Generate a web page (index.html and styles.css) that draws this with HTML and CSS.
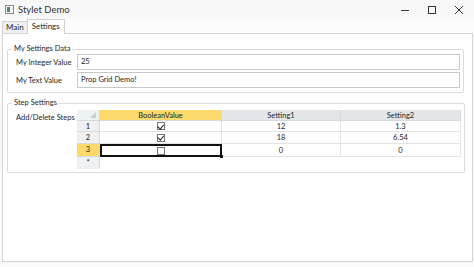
FILE: index.html
```html
<!DOCTYPE html>
<html lang="en">
<head>
  <meta charset="UTF-8" />
  <title>Stylet Demo</title>
  <link rel="stylesheet" href="styles.css">
</head>
<body>
  <div class="window">
    <div class="titlebar">
      <svg class="app-icon" width="9" height="9" viewBox="0 0 9 9">
        <rect x="0.5" y="0.5" width="8" height="8" fill="#f4f4f4" stroke="#8a8a8a"/>
        <rect x="2" y="2" width="3" height="5" fill="#3d8f86"/>
      </svg>
      <span class="title">Stylet Demo</span>
      <div class="controls">
        <svg width="10" height="10" viewBox="0 0 10 10"><path d="M1 5.5h8" stroke="#333" stroke-width="1"/></svg>
        <svg width="10" height="10" viewBox="0 0 10 10"><rect x="1.5" y="1.5" width="7" height="7" fill="none" stroke="#333"/></svg>
        <svg width="10" height="10" viewBox="0 0 10 10"><path d="M1 1l8 8M9 1l-8 8" stroke="#333"/></svg>
      </div>
    </div>

    <div class="tabs">
      <div class="tab">Main</div>
      <div class="tab active">Settings</div>
    </div>

    <div class="panel">
      <fieldset class="group">
        <legend>My Settings Data</legend>
        <div class="field">
          <label>My Integer Value</label>
          <div class="input">25</div>
        </div>
        <div class="field">
          <label>My Text Value</label>
          <div class="input">Prop Grid Demo!</div>
        </div>
      </fieldset>

      <fieldset class="group steps">
        <legend>Step Settings</legend>
        <div class="field top">
          <label>Add/Delete Steps</label>
          <div class="grid">
            <div class="corner"><svg width="6" height="6" viewBox="0 0 6 6"><path d="M6 0v6H0z" fill="#c9cdd1"/></svg></div>
            <div class="col-head current">BooleanValue</div>
            <div class="col-head">Setting1</div>
            <div class="col-head">Setting2</div>

            <div class="row-head">1</div>
            <div class="cell"><span class="check on"></span></div>
            <div class="cell">12</div>
            <div class="cell">1.3</div>

            <div class="row-head">2</div>
            <div class="cell"><span class="check on"></span></div>
            <div class="cell">18</div>
            <div class="cell">6.54</div>

            <div class="row-head current">3</div>
            <div class="cell selected"><span class="check"></span></div>
            <div class="cell">0</div>
            <div class="cell">0</div>

            <div class="row-head new">*</div>
          </div>
        </div>
      </fieldset>
    </div>
  </div>
</body>
</html>
```

FILE: styles.css
```css
* {
  box-sizing: border-box;
}

body {
  margin: 0;
  font-family: Lato, 'Liberation Sans', sans-serif;
  font-size: 7.5px;
  color: #262626;
  background: #e9e9e9;
}

.window {
  width: 474px;
  height: 267px;
  display: flex;
  flex-direction: column;
  background: #fafafa;
}

.titlebar {
  height: 19px;
  display: flex;
  align-items: center;
  padding-left: 5px;
  background: #f8f8f8;
}

.app-icon {
  margin-right: 4px;
}

.title {
  font-size: 9.5px;
  color: #333;
}

.controls {
  margin-left: auto;
  display: flex;
  gap: 17px;
  padding-right: 10px;
}

.tabs {
  height: 14px;
  display: flex;
  align-items: flex-end;
  padding-left: 2px;
  background: #fcfcfc;
  font-size: 8px;
}

.tab {
  height: 12px;
  padding: 0 3px;
  border: 1px solid #d0d0d0;
  border-bottom: none;
  background: #f0f0f0;
  line-height: 11px;
  white-space: nowrap;
}

.tab.active {
  height: 15px;
  margin-bottom: -1px;
  margin-left: -1px;
  padding: 0 4px;
  background: #fff;
  position: relative;
  z-index: 1;
  line-height: 13px;
}

.panel {
  flex: 1;
  margin: 0 1px 5px 2px;
  border: 1px solid #d5d5d5;
  background: #fff;
  padding: 10px 8px 0 4px;
}

.group {
  margin: 0 0 5px;
  padding: 0 3px 2px 8px;
  border: 1px solid #dcdcdc;
  border-radius: 2px;
}

.group legend {
  padding: 0 2px;
  margin-left: -4px;
  line-height: 10px;
  font-size: 7.5px;
  white-space: nowrap;
}

.steps {
  padding-top: 2px;
  padding-bottom: 3px;
}

.field {
  display: flex;
  align-items: center;
  margin-bottom: 2px;
}

.steps .field {
  margin-bottom: 0;
}

.field.top {
  align-items: flex-start;
}

.field label {
  width: 61px;
  flex-shrink: 0;
  white-space: nowrap;
}

.field.top label {
  padding-top: 3px;
}

.input {
  flex: 1;
  height: 16px;
  border: 1px solid #c8c8c8;
  padding-left: 3px;
  line-height: 14px;
}

.grid {
  flex: 1;
  display: grid;
  grid-template-columns: 23px 122px 119px 120px;
  grid-template-rows: 11px 11px 12px 13px 12px;
  line-height: 11px;
}

.corner,
.col-head,
.row-head {
  background: #eef0f2;
  border-right: 1px solid #d5d8dc;
  border-bottom: 1px solid #d5d8dc;
  text-align: center;
}

.corner {
  display: flex;
  align-items: flex-end;
  justify-content: flex-end;
  padding: 0 3px 2px 0;
}

.col-head {
  background: #e3e6e9;
}

.col-head.current,
.row-head.current {
  background: #fbd96a;
}

.cell {
  border-right: 1px solid #e4e4e4;
  border-bottom: 1px solid #e4e4e4;
  text-align: center;
  display: flex;
  align-items: center;
  justify-content: center;
}

.cell.selected {
  border: 2px solid #111;
  position: relative;
}

.cell.selected::after {
  content: "";
  position: absolute;
  right: -3px;
  bottom: -3px;
  width: 3px;
  height: 3px;
  background: #111;
}

.check {
  width: 8px;
  height: 8px;
  border: 1px solid #777;
  background: #fff;
  position: relative;
}

.check.on::after {
  content: "";
  position: absolute;
  left: 1.5px;
  top: -0.5px;
  width: 2.5px;
  height: 4.5px;
  border-right: 1.2px solid #222;
  border-bottom: 1.2px solid #222;
  transform: rotate(40deg);
}

.row-head.new {
  border-bottom: none;
}
```
